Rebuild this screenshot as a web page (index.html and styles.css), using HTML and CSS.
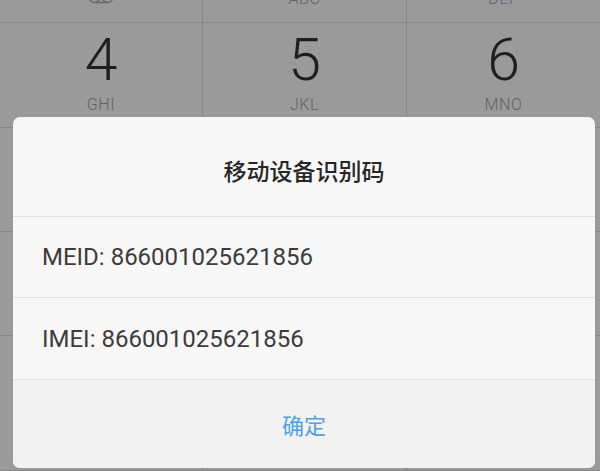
FILE: index.html
```html
<!DOCTYPE html>
<html lang="zh-CN">
<head>
<meta charset="utf-8">
<title>移动设备识别码</title>
<link rel="stylesheet" href="styles.css">
</head>
<body>
<div class="screen">
  <div class="keypad">
    <div class="key key-top">
      <svg class="vm" width="26" height="12" viewBox="0 0 26 12" aria-hidden="true">
        <circle cx="6.5" cy="5.5" r="5" fill="none" stroke="#6a6a6a" stroke-width="1.6"/>
        <circle cx="19.5" cy="5.5" r="5" fill="none" stroke="#6a6a6a" stroke-width="1.6"/>
        <line x1="6.5" y1="10.5" x2="19.5" y2="10.5" stroke="#6a6a6a" stroke-width="1.6"/>
      </svg>
    </div>
    <div class="key key-top"><span class="letters">ABC</span></div>
    <div class="key key-top"><span class="letters">DEF</span></div>

    <div class="key"><span class="digit">4</span><span class="letters">GHI</span></div>
    <div class="key"><span class="digit">5</span><span class="letters">JKL</span></div>
    <div class="key"><span class="digit">6</span><span class="letters">MNO</span></div>

    <div class="key"></div>
    <div class="key"></div>
    <div class="key"></div>

    <div class="key"></div>
    <div class="key"></div>
    <div class="key"></div>

    <div class="key"></div>
    <div class="key"></div>
    <div class="key"></div>
  </div>

  <div class="dialog">
    <div class="dialog-title">移动设备识别码</div>
    <div class="dialog-row">MEID: 866001025621856</div>
    <div class="dialog-row dialog-row-2">IMEI: 866001025621856</div>
    <div class="dialog-button">确定</div>
  </div>
</div>
</body>
</html>
```
FILE: styles.css
```css
html, body {
  margin: 0;
  padding: 0;
}

body {
  width: 600px;
  height: 471px;
  overflow: hidden;
  background: #9a9a9a;
  font-family: Roboto, "Liberation Sans", "Noto Sans CJK SC", sans-serif;
}

.screen {
  position: relative;
  width: 600px;
  height: 471px;
  overflow: hidden;
}

.keypad {
  display: grid;
  grid-template-columns: 203px 204px 1fr;
  grid-template-rows: 23px 105px 104px 104px 1fr;
  height: 471px;
  background: #9a9a9a;
}

.key {
  display: flex;
  flex-direction: column;
  align-items: center;
  justify-content: flex-end;
  padding-bottom: 14px;
  border-right: 1px solid #878787;
  border-bottom: 1px solid #878787;
  overflow: hidden;
  box-sizing: border-box;
}

.key:nth-child(3n) {
  border-right: none;
}

.key-top {
  padding-bottom: 15px;
}

.key-top .vm {
  margin-bottom: 3px;
  flex: none;
}

.digit {
  font-family: Roboto, "Liberation Sans", sans-serif;
  font-weight: 300;
  font-size: 59px;
  line-height: 52px;
  color: #1e1e1e;
}

.letters {
  margin-top: 11px;
  font-family: Roboto, "Liberation Sans", sans-serif;
  font-weight: 300;
  font-size: 16px;
  line-height: 16px;
  color: #626262;
  letter-spacing: 0.6px;
}

.dialog {
  position: absolute;
  left: 13px;
  top: 117px;
  width: 582px;
  height: 351px;
  border-radius: 7px;
  background: #f7f7f7;
  overflow: hidden;
  display: flex;
  flex-direction: column;
}

.dialog-title {
  height: 100px;
  display: flex;
  align-items: center;
  justify-content: center;
  padding-top: 6px;
  box-sizing: border-box;
  font-family: "Noto Sans CJK SC", sans-serif;
  font-weight: 500;
  font-size: 23px;
  color: #262626;
  border-bottom: 1px solid #e2e2e2;
}

.dialog-row {
  height: 81px;
  display: flex;
  align-items: center;
  padding-left: 29px;
  box-sizing: border-box;
  font-family: Roboto, "Liberation Sans", sans-serif;
  font-size: 24px;
  color: #3c3c3c;
  border-bottom: 1px solid #e2e2e2;
}

.dialog-row-2 {
  height: 82px;
}

.dialog-button {
  flex: 1;
  display: flex;
  align-items: center;
  justify-content: center;
  background: #f2f2f2;
  font-family: "Noto Sans CJK SC", sans-serif;
  font-size: 22px;
  color: #4da2de;
}
```
